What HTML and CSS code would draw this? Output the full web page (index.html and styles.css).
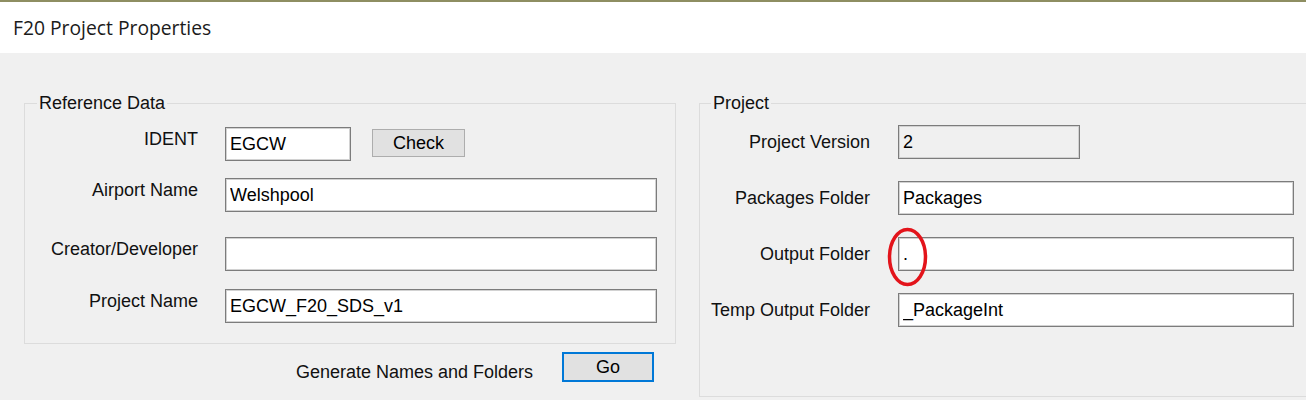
FILE: index.html
```html
<!DOCTYPE html>
<html lang="en">
<head>
  <meta charset="UTF-8">
  <title>F20 Project Properties</title>
  <link rel="stylesheet" href="styles.css">
</head>
<body>

  <div class="titlebar">F20 Project Properties</div>

  <div class="content">
    <div class="left-col">
      <fieldset class="group group-ref">
        <legend>Reference Data</legend>
        <div class="rows">
          <div class="row">
            <label class="lbl">IDENT</label>
            <div class="field">
              <input class="txt txt-ident" type="text" value="EGCW">
              <button class="btn btn-check">Check</button>
            </div>
          </div>
          <div class="row">
            <label class="lbl">Airport Name</label>
            <div class="field">
              <input class="txt" type="text" value="Welshpool">
            </div>
          </div>
          <div class="row row-creator">
            <label class="lbl">Creator/Developer</label>
            <div class="field">
              <input class="txt" type="text" value="">
            </div>
          </div>
          <div class="row row-project">
            <label class="lbl">Project Name</label>
            <div class="field">
              <input class="txt" type="text" value="EGCW_F20_SDS_v1">
            </div>
          </div>
        </div>
      </fieldset>
      <div class="actions">
        <span class="actions-text">Generate Names and Folders</span>
        <button class="btn btn-go">Go</button>
      </div>
    </div>

    <fieldset class="group group-project">
      <legend>Project</legend>
      <div class="rows rows-r">
        <div class="row-r">
          <label class="lbl-r">Project Version</label>
          <div class="field">
            <input class="txt txt-version" type="text" value="2" readonly>
          </div>
        </div>
        <div class="row-r">
          <label class="lbl-r">Packages Folder</label>
          <div class="field">
            <input class="txt txt-wide" type="text" value="Packages">
          </div>
        </div>
        <div class="row-r">
          <label class="lbl-r">Output Folder</label>
          <div class="field field-marked">
            <input class="txt txt-wide" type="text" value=".">
            <svg class="mark" width="41" height="60" viewBox="0 0 41 60">
              <ellipse cx="20.5" cy="30" rx="18" ry="27.5" fill="none" stroke="#e3141b" stroke-width="3.5"/>
            </svg>
          </div>
        </div>
        <div class="row-r">
          <label class="lbl-r">Temp Output Folder</label>
          <div class="field">
            <input class="txt txt-wide" type="text" value="_PackageInt">
          </div>
        </div>
      </div>
    </fieldset>
  </div>

</body>
</html>
```

FILE: styles.css
```css
body {
  margin: 0;
  width: 1306px;
  height: 400px;
  overflow: hidden;
  background: #f0f0f0;
  font-family: "Liberation Sans", Arial, sans-serif;
  font-size: 18px;
  color: #111;
}

.titlebar {
  height: 51px;
  border-top: 2px solid #8e8e62;
  background: #ffffff;
  padding-left: 13px;
  font-family: "Open Sans", "Noto Sans", sans-serif;
  font-size: 19.3px;
  line-height: 51px;
  color: #1b1b1b;
}

.content {
  display: flex;
  gap: 23px;
  padding: 40px 0 0 24px;
}

.left-col {
  width: 652px;
  flex: none;
}

.group {
  margin: 0;
  padding: 0;
  min-width: 0;
  border: 1px solid #dcdcdc;
}

.group legend {
  margin-left: 12px;
  padding: 0 2px;
  line-height: 20px;
}

.group-project {
  width: 620px;
  flex: none;
}

.group-project legend {
  margin-left: 11px;
}

.rows {
  display: flex;
  flex-direction: column;
  gap: 17px;
  padding: 14px 0 20px;
}

.rows-r {
  gap: 22px;
  padding: 12px 0 69px;
}

.row {
  display: grid;
  grid-template-columns: 173px auto;
  column-gap: 27px;
  align-items: start;
}

.row-creator {
  margin-top: 8px;
}

.row-project {
  margin-top: 1px;
}

.lbl {
  text-align: right;
  line-height: 20px;
  padding-top: 2px;
}

.row-r {
  display: grid;
  grid-template-columns: 170px auto;
  column-gap: 28px;
  align-items: center;
}

.lbl-r {
  text-align: right;
  line-height: 20px;
}

.field {
  display: flex;
  align-items: flex-start;
}

.field-marked {
  position: relative;
}

.mark {
  position: absolute;
  left: -11px;
  top: -10px;
  pointer-events: none;
}

.txt {
  box-sizing: border-box;
  width: 432px;
  height: 34px;
  margin: 0;
  padding: 0 4px;
  border: 1px solid #7c7c7c;
  box-shadow: inset 0 0 0 1px #d2d2d2;
  background: #ffffff;
  font-family: "Liberation Sans", Arial, sans-serif;
  font-size: 18px;
  color: #000;
  outline: none;
}

.txt-ident {
  width: 126px;
}

.txt-version {
  width: 182px;
  background: #f0f0f0;
}

.txt-wide {
  width: 396px;
}

.btn {
  box-sizing: border-box;
  margin: 0;
  padding: 0;
  background: #e1e1e1;
  border: 1px solid #adadad;
  font-family: "Liberation Sans", Arial, sans-serif;
  font-size: 18px;
  color: #000;
}

.btn-check {
  width: 93px;
  height: 28px;
  margin: 2px 0 0 21px;
}

.actions {
  display: flex;
  justify-content: flex-end;
  align-items: flex-end;
  gap: 29px;
  margin-top: 8px;
  padding-right: 22px;
}

.actions-text {
  line-height: 20px;
}

.btn-go {
  width: 92px;
  height: 30px;
  border: 2px solid #0078d7;
}
```
